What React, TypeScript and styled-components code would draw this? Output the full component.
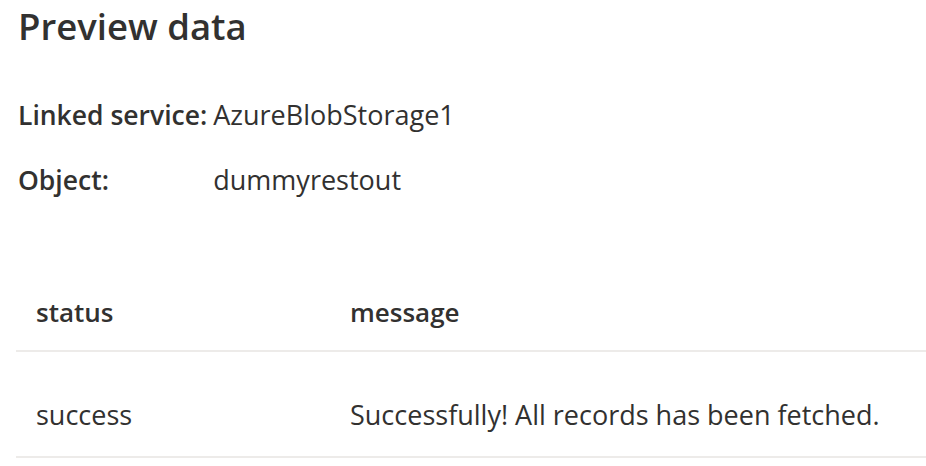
import React from "react";
import styled, { createGlobalStyle } from "styled-components";

const Global = createGlobalStyle`
  html, body { margin: 0; padding: 0; background: #ffffff; }
  body { font-family: "Open Sans", "Noto Sans", sans-serif; color: #323130; }
`;

const Page = styled.div`
  width: 926px;
  height: 466px;
  padding: 0 0 0 16px;
  box-sizing: border-box;
  overflow: hidden;
`;

const Title = styled.h1`
  margin: 0;
  padding: 2px 0 0 2px;
  font-size: 36.5px;
  line-height: 48px;
  font-weight: 600;
  color: #323130;
`;

const Details = styled.div`
  display: grid;
  grid-template-columns: auto 1fr;
  column-gap: 6px;
  row-gap: 29px;
  margin: 46.5px 0 0 2px;
  line-height: 36px;
`;

const Label = styled.div`
  font-size: 26.5px;
  font-weight: 600;
`;

const Value = styled.div`
  font-size: 27px;
  font-weight: 400;
`;

const Table = styled.div`
  margin-top: 76.5px;
  display: grid;
  grid-template-columns: 314px 1fr;
`;

const Cell = styled.div<{ $head?: boolean }>`
  padding: ${(p) => (p.$head ? "20px 0 20px 20px" : "44.5px 0 23.5px 20px")};
  line-height: 36px;
  font-size: ${(p) => (p.$head ? "26px" : "27px")};
  font-weight: ${(p) => (p.$head ? 600 : 400)};
  border-bottom: 2px solid #edebe9;
  white-space: nowrap;
`;

export default function App() {
  return (
    <>
      <Global />
      <Page>
        <Title>Preview data</Title>
        <Details>
          <Label>Linked service:</Label>
          <Value>AzureBlobStorage1</Value>
          <Label>Object:</Label>
          <Value>dummyrestout</Value>
        </Details>
        <Table>
          <Cell $head>status</Cell>
          <Cell $head>message</Cell>
          <Cell>success</Cell>
          <Cell>Successfully! All records has been fetched.</Cell>
        </Table>
      </Page>
    </>
  );
}
